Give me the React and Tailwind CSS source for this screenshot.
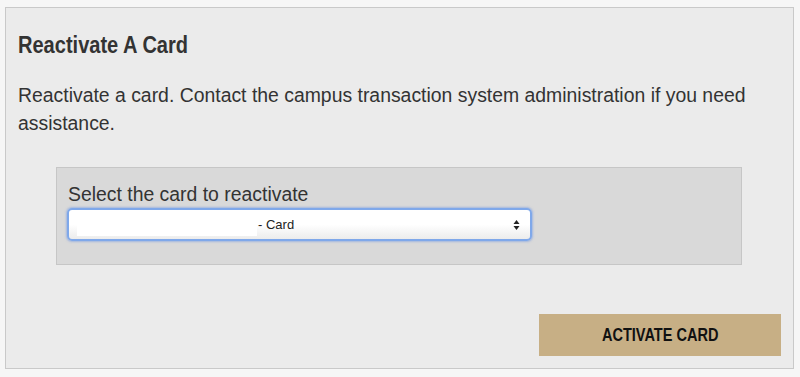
import React from 'react';

// Reactivate card panel
export default function App() {
  return (
    <div className="w-[800px] h-[377px] bg-[#f6f6f6] pt-[7px] pl-[5px] overflow-hidden" style={{ fontFamily: '"Liberation Sans", Arial, sans-serif' }}>
      <div className="w-[789px] h-[362px] border border-[#c9c9c9] bg-[#ebebeb] px-[12px] flex flex-col">
        <h2 className="mt-[22px] text-[24px] font-bold leading-[30px] text-[#333]">
          <span className="inline-block origin-left scale-x-[0.835] whitespace-nowrap">Reactivate A Card</span>
        </h2>
        <p className="mt-[21px] text-[19.4px] leading-[28px] text-[#333]">
          Reactivate a card. Contact the campus transaction system administration if you need assistance.
        </p>

        <div className="mt-[30px] ml-[38px] w-[686px] h-[98px] border border-[#c6c6c6] bg-[#d9d9d9] pt-[16px] pl-[10px]">
          <label className="block pl-[1px] text-[19.4px] leading-[20px] text-[#333]">Select the card to reactivate</label>
          <div className="mt-[4px] w-[465px] h-[33px] rounded-[5px] border-2 border-[#7fa8ea] shadow-[0_0_2px_1px_rgba(110,150,230,0.5)] bg-gradient-to-b from-white via-white to-[#ececec] flex items-center pl-[8px] pr-[10px]">
            <div className="w-[180px] h-[22px] bg-white" />
            <span className="ml-[1px] text-[13px] text-[#222]">- Card</span>
            <svg className="ml-auto" width="7" height="12" viewBox="0 0 7 12">
              <path d="M3.5 1 L6.5 5 L0.5 5 Z" fill="#222" />
              <path d="M3.5 11 L6.5 7 L0.5 7 Z" fill="#222" />
            </svg>
          </div>
        </div>

        <div className="mt-[49px] flex justify-end">
          <button className="w-[242px] h-[42px] bg-[#c7af85] text-[17.5px] font-bold text-[#111] flex items-center justify-center">
            <span className="inline-block scale-x-[0.83] whitespace-nowrap">ACTIVATE CARD</span>
          </button>
        </div>
      </div>
    </div>
  );
}
